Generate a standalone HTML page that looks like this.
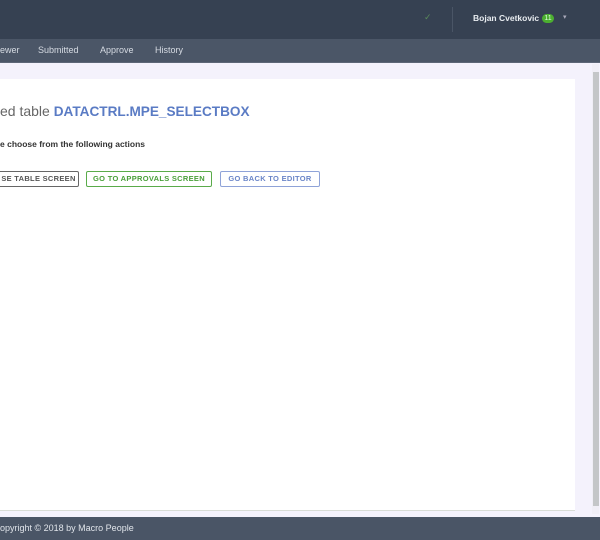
<!DOCTYPE html>
<html><head><style>
body{margin:0;width:600px;height:540px;overflow:hidden;font-family:"Liberation Sans",sans-serif;background:#f4f2fc;position:relative}
.top{position:absolute;left:0;top:0;width:600px;height:39px;background:#364152}
.nav{position:absolute;left:0;top:39px;width:600px;height:23px;background:#4b5667;border-bottom:1px solid #5d6677}
.nav span{position:absolute;top:6px;font-size:9px;color:#d6dbe3}
.card{position:absolute;left:0;top:79px;width:575px;height:431px;background:#fff;border-bottom:1px solid #d8dcd6}
.sb{position:absolute;left:592px;top:64px;width:7px;height:450px;background:#f0eef6}
.sb i{position:absolute;left:1px;top:8px;width:6px;height:434px;background:#c4c6c8}
.foot{position:absolute;left:0;top:517px;width:600px;height:23px;background:#4a5566;color:#e0e4ea;font-size:9px}
.btn{position:absolute;top:171px;border:1px solid;border-radius:2px;font-size:7.5px;font-weight:bold;letter-spacing:.3px;line-height:14px;text-align:center;box-sizing:border-box;height:16px}
</style></head><body>
<div class="top">
<span style="position:absolute;left:424px;top:12px;color:#5a8a5a;font-size:9px">✓</span>
<div style="position:absolute;left:452px;top:7px;width:1px;height:25px;background:#4a5566"></div>
<span style="position:absolute;left:473px;top:13px;font-size:8.5px;color:#e8ecf0;font-weight:bold">Bojan Cvetkovic</span>
<span style="position:absolute;left:542px;top:14px;width:12px;height:9px;border-radius:5px;background:#4caf30;color:#dfd;font-size:7px;text-align:center;line-height:9px">11</span>
<span style="position:absolute;left:563px;top:13px;font-size:7px;color:#aab">▾</span>
</div>
<div class="nav"><span style="left:0">ewer</span><span style="left:38px">Submitted</span><span style="left:100px">Approve</span><span style="left:155px">History</span></div>
<div class="card">
<div style="position:absolute;left:0;top:24px;font-size:14px;color:#666">ed table <span style="color:#5a7bc4;font-weight:bold;font-size:13.6px">DATACTRL.MPE_SELECTBOX</span></div>
<div style="position:absolute;left:0;top:60px;font-size:8.5px;font-weight:bold;color:#333">e choose from the following actions</div>
</div>
<div class="btn" style="left:-2px;width:81px;border-color:#666;color:#555">SE TABLE SCREEN</div>
<div class="btn" style="left:86px;width:126px;border-color:#5aab4a;color:#4aa03a">GO TO APPROVALS SCREEN</div>
<div class="btn" style="left:220px;width:100px;border-color:#8fa3d8;color:#6a85c8">GO BACK TO EDITOR</div>
<div class="sb"><i></i></div>
<div class="foot"><span style="position:absolute;left:0;top:6px">opyright © 2018 by Macro People</span></div>
</body></html>
